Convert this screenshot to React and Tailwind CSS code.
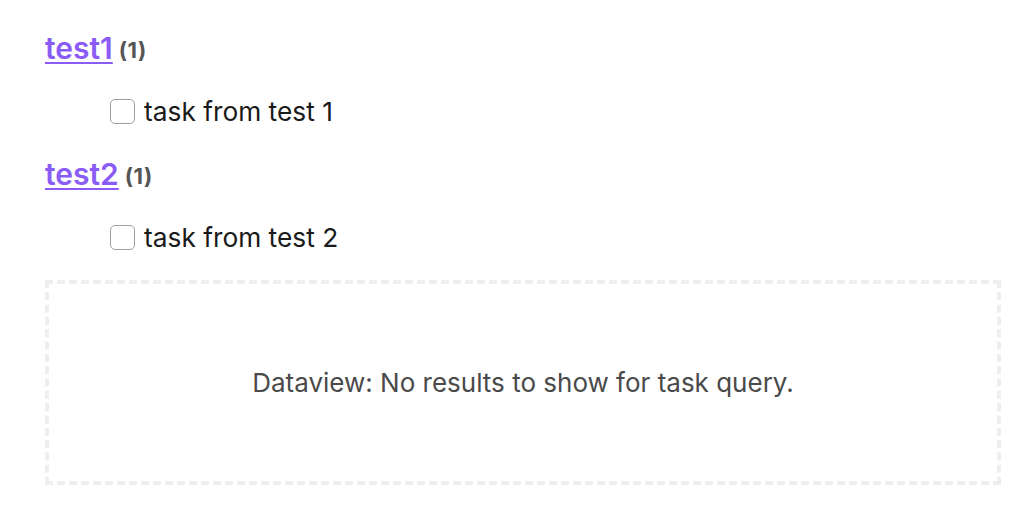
import React from "react";

function Heading({ name }) {
  return (
    <div className="flex h-[63px] items-center gap-[6px]">
      <a className="text-[30px] font-semibold text-[#8a5cf5] underline decoration-[2px] underline-offset-[3px]">{name}</a>
      <span className="text-[22px] font-bold tracking-[0.5px] text-[#555555] mt-[3px]">(1)</span>
    </div>
  );
}

function Task({ text }) {
  return (
    <div className="flex h-[63px] items-center pl-[65px] gap-[9px]">
      <span className="w-[25px] h-[25px] rounded-[5px] border-[1.5px] border-[#9e9e9e] bg-white" />
      <span className="text-[26.3px] text-[#1a1a1a]">{text}</span>
    </div>
  );
}

export default function App() {
  return (
    <div className="w-[1034px] h-[516px] bg-white pl-[45px] pr-[33px] pt-[17px]" style={{ fontFamily: "Inter, 'Noto Sans', sans-serif" }}>
      <Heading name="test1" />
      <Task text="task from test 1" />
      <Heading name="test2" />
      <Task text="task from test 2" />
      <div className="mt-[11px] h-[205px] border-[4px] border-dashed border-[#eeeeee] flex items-center justify-center">
        <span className="text-[26px] text-[#4a4a4a]">Dataview: No results to show for task query.</span>
      </div>
    </div>
  );
}
